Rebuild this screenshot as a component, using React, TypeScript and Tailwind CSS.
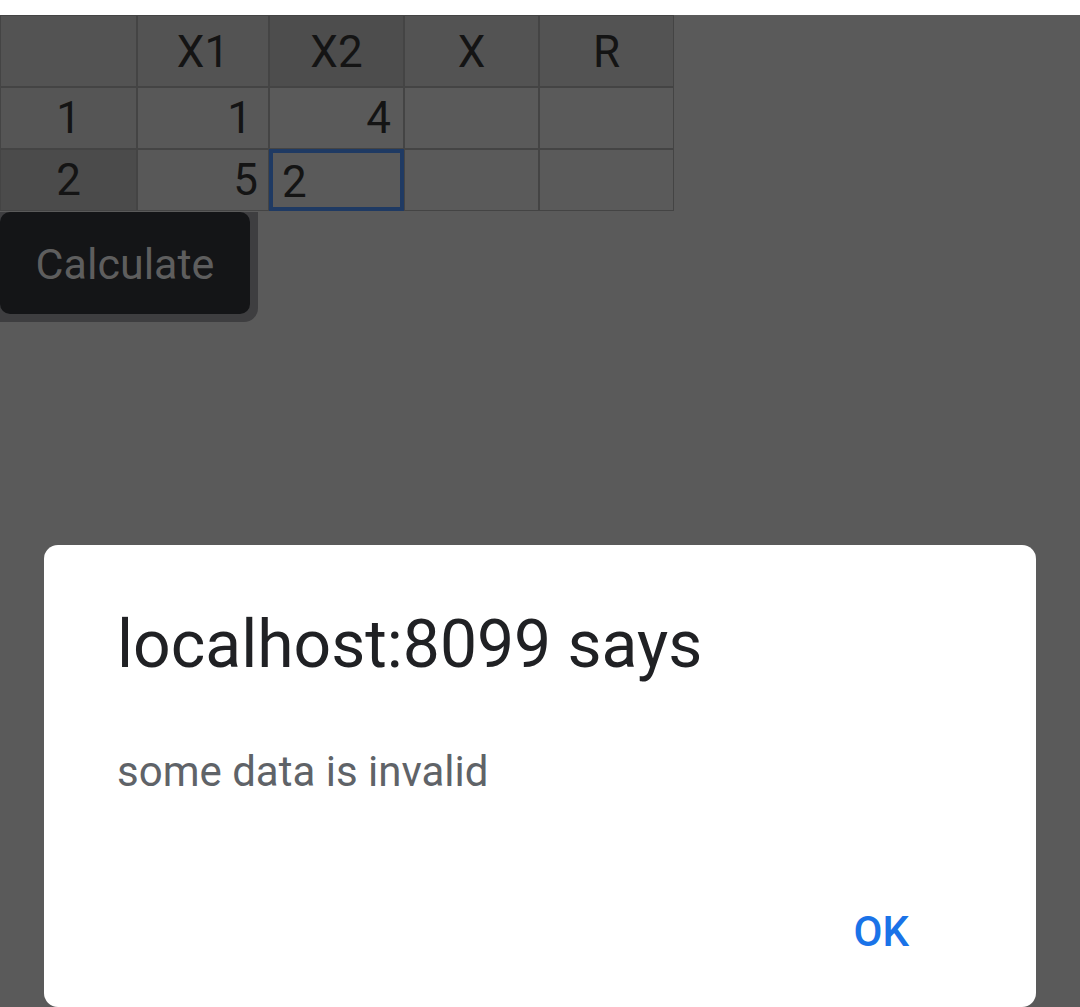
import React from "react";

const cols = ["", "X1", "X2", "X", "R"];
const widths = ["w-[137px]", "w-[132px]", "w-[135px]", "w-[135px]", "w-[135px]"];

function Cell({ w, children, className = "" }: { w: string; children?: React.ReactNode; className?: string }) {
  return (
    <div className={`${w} h-full border border-[#444444] flex items-center ${className}`}>
      {children}
    </div>
  );
}

export default function App() {
  return (
    <div className="w-[1080px] h-[1007px] overflow-hidden bg-[#5a5a5a] flex flex-col font-['Roboto',sans-serif]">
      <div className="h-[15px] bg-white shrink-0" />
      <div className="flex flex-col w-[674px] text-[44px] text-[#141414] leading-none">
        <div className="flex h-[72px]">
          {cols.map((c, i) => (
            <Cell key={i} w={widths[i]} className={`justify-center pt-[2px] ${i === 2 ? "bg-[#4d4d4d]" : "bg-[#535353]"}`}>
              {c}
            </Cell>
          ))}
        </div>
        <div className="flex h-[62px]">
          <Cell w={widths[0]} className="justify-center bg-[#555555]">1</Cell>
          <Cell w={widths[1]} className="justify-end pr-[16px] bg-[#585858]">1</Cell>
          <Cell w={widths[2]} className="justify-end pr-[12px] bg-[#5a5a5a]">4</Cell>
          <Cell w={widths[3]} className="bg-[#5a5a5a]" />
          <Cell w={widths[4]} className="bg-[#5a5a5a]" />
        </div>
        <div className="flex h-[62px]">
          <Cell w={widths[0]} className="justify-center bg-[#4b4b4b]">2</Cell>
          <Cell w={widths[1]} className="justify-end pr-[10px] bg-[#585858]">5</Cell>
          <div className="w-[135px] h-full border-[4px] border-[#1f3a63] flex items-center pl-[9px] pt-[4px] bg-[#5a5a5a]">2</div>
          <Cell w={widths[3]} className="bg-[#5a5a5a]" />
          <Cell w={widths[4]} className="bg-[#5a5a5a]" />
        </div>
      </div>
      <div className="mt-[1px] w-[258px] h-[111px] rounded-br-[14px] bg-[#3e3e40] pr-[8px] pb-[8px]">
        <div className="w-full h-full rounded-[10px] bg-[#141517] flex items-center justify-center text-[43px] text-[#5e5e5e] pt-[2px]">
          Calculate
        </div>
      </div>
      <div className="mt-[223px] mx-[44px] h-[462px] shrink-0 bg-white rounded-[14px] flex flex-col pl-[73px] pr-[127px]">
        <div className="mt-[67px] text-[66px] text-[#202124] leading-none">localhost:8099 says</div>
        <div className="mt-[73px] text-[42px] text-[#5f6368] leading-none">some data is invalid</div>
        <div className="mt-[118px] self-end text-[42px] font-medium text-[#1a73e8] leading-none">OK</div>
      </div>
    </div>
  );
}
